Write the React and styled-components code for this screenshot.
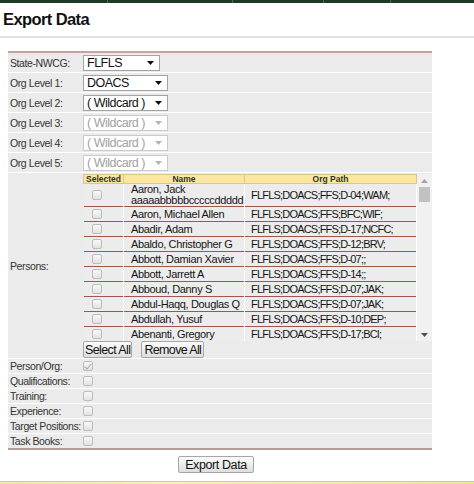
import React from 'react'
import styled, { createGlobalStyle } from 'styled-components'

const GlobalStyle = createGlobalStyle`
    html, body {
        margin: 0;
        padding: 0;
        background: #fff;
    }
    body {
        font-family: "Liberation Sans", Arial, sans-serif;
        color: #222;
    }
`;

const Page = styled.div`
    width: 474px;
    height: 484px;
    overflow: hidden;
    display: flex;
    flex-direction: column;
`;

const TopNav = styled.div`
    height: 3px;
    flex-shrink: 0;
    display: flex;
    background: #1d3a29;
`;

const NavItem = styled.div`
    width: ${p => p.$w}px;
    border-right: 1px solid #4f6c59;
`;

const Header = styled.div`
    padding: 6px 3px 7px;
    border-bottom: 2px solid #e3e3e3;
`;

const Title = styled.h1`
    margin: 0;
    font-size: 16.5px;
    line-height: 20px;
    font-weight: bold;
    letter-spacing: -0.6px;
    color: #111;
`;

const Main = styled.div`
    padding: 13px 0 0 8px;
`;

const FormTable = styled.div`
    width: 424px;
    display: flex;
    flex-direction: column;
    border-top: 2px solid #c4a39c;
    border-bottom: 2px solid #b39f98;
`;

const Row = styled.div`
    display: grid;
    grid-template-columns: 75px 1fr;
    align-items: center;
    min-height: ${p => p.$h}px;
    background: #ebebeb;
    & + & {
        border-top: 1px solid #fff;
    }
`;

const Label = styled.div`
    padding-left: 2px;
    font-size: 10.5px;
    letter-spacing: -0.4px;
    color: #333;
    white-space: nowrap;
`;

const SelectBox = styled.div`
    display: flex;
    align-items: center;
    justify-content: space-between;
    box-sizing: border-box;
    width: ${p => p.$w}px;
    height: 16px;
    padding: 0 5px 0 3px;
    background: #fff;
    border: 1px solid ${p => (p.$disabled ? '#cacaca' : '#a3a3a3')};
    font-size: 12.5px;
    letter-spacing: -0.5px;
    color: ${p => (p.$disabled ? '#a2a2a2' : '#111')};
    white-space: pre;
`;

const PersonsBox = styled.div`
    display: flex;
    flex-direction: column;
    padding-top: 1px;
`;

const ListFrame = styled.div`
    display: flex;
    height: 167px;
`;

const ListViewport = styled.div`
    width: 334px;
    overflow: hidden;
`;

const Table = styled.table`
    width: 334px;
    table-layout: fixed;
    border-collapse: collapse;
`;

const HeadCell = styled.th`
    width: ${p => p.$w}px;
    height: 8px;
    padding: 0;
    background: #fbe7a1;
    border: 1px solid #dcc68a;
    font-size: 8.5px;
    line-height: 8px;
    font-weight: bold;
    color: #333;
    text-align: center;
`;

const BodyRow = styled.tr`
    border-bottom: 1px solid #a0574b;
`;

const Cell = styled.td`
    height: ${p => (p.$tall ? 22 : 14)}px;
    padding: 0 0 0 ${p => p.$pad}px;
    background: #ececec;
    border-right: 1px solid #fff;
    font-size: 11px;
    line-height: 11px;
    letter-spacing: ${p => p.$ls}px;
    white-space: ${p => (p.$tall ? 'normal' : 'nowrap')};
    color: #151515;
    vertical-align: middle;
    overflow: hidden;
`;

const Scrollbar = styled.div`
    width: 15px;
    display: flex;
    flex-direction: column;
    background: #f1f1f1;
`;

const ScrollArrow = styled.div`
    height: 13px;
    display: flex;
    align-items: center;
    justify-content: center;
`;

const Thumb = styled.div`
    height: 15px;
    margin: 0 2px;
    background: #c1c1c1;
`;

const Track = styled.div`
    flex: 1;
`;

const ButtonRow = styled.div`
    display: flex;
    gap: 9px;
`;

const Button = styled.button`
    height: ${p => p.$h || 17}px;
    padding: 0 ${p => p.$px || 1}px;
    margin: 0;
    border: 1px solid #a6a6a6;
    border-radius: 2px;
    background: linear-gradient(#fbfbfb, #dedede);
    font-family: "Liberation Sans", Arial, sans-serif;
    font-size: 12.5px;
    letter-spacing: ${p => p.$ls}px;
    color: #111;
    line-height: 14px;
    white-space: nowrap;
`;

const Check = styled.input.attrs({ type: 'checkbox' })`
    appearance: none;
    -webkit-appearance: none;
    position: relative;
    width: 10px;
    height: 10px;
    margin: 0;
    border: 1px solid #bcbcbc;
    border-radius: 2px;
    background: linear-gradient(#f8f8f8, #e2e2e2);
    display: block;
    &:checked::after {
        content: '';
        position: absolute;
        left: 2px;
        top: 0px;
        width: 3px;
        height: 6px;
        border: solid #a9a9a9;
        border-width: 0 1.5px 1.5px 0;
        transform: rotate(40deg);
    }
`;

const ExportRow = styled.div`
    width: 424px;
    display: flex;
    justify-content: center;
    padding: 6px 0 0;
    margin-left: -4px;
`;

const Footer = styled.div`
    margin-top: 8px;
    height: 20px;
    border-top: 1px solid #d4cda6;
    background: linear-gradient(90deg, #f1e5a4 0%, #f8f0bd 35%, #f3e9a8 70%, #efe29a 100%);
`;

const Arrow = ({ color = '#111', up }) => (
    <svg width="7" height="4" viewBox="0 0 7 4">
        <polygon points={up ? '0,4 7,4 3.5,0' : '0,0 7,0 3.5,4'} fill={color} />
    </svg>
);

const Select = ({ value, width, disabled }) => (
    <SelectBox $w={width} $disabled={disabled} role="combobox">
        <span>{value}</span>
        <Arrow color={disabled ? '#b4b4b4' : '#111'} />
    </SelectBox>
);

const selects = [
    { label: 'State-NWCG:', value: 'FLFLS', width: 77 },
    { label: 'Org Level 1:', value: 'DOACS', width: 85 },
    { label: 'Org Level 2:', value: '( Wildcard )', width: 85 },
    { label: 'Org Level 3:', value: '( Wildcard )', width: 85, disabled: true },
    { label: 'Org Level 4:', value: '( Wildcard )', width: 85, disabled: true },
    { label: 'Org Level 5:', value: '( Wildcard )', width: 85, disabled: true },
];

const persons = [
    { name: 'Aaron, Jack aaaaabbbbbcccccddddd', path: 'FLFLS;DOACS;FFS;D-04;WAM;', tall: true },
    { name: 'Aaron, Michael Allen', path: 'FLFLS;DOACS;FFS;BFC;WIF;' },
    { name: 'Abadir, Adam', path: 'FLFLS;DOACS;FFS;D-17;NCFC;' },
    { name: 'Abaldo, Christopher G', path: 'FLFLS;DOACS;FFS;D-12;BRV;' },
    { name: 'Abbott, Damian Xavier', path: 'FLFLS;DOACS;FFS;D-07;;' },
    { name: 'Abbott, Jarrett A', path: 'FLFLS;DOACS;FFS;D-14;;' },
    { name: 'Abboud, Danny S', path: 'FLFLS;DOACS;FFS;D-07;JAK;' },
    { name: 'Abdul-Haqq, Douglas Q', path: 'FLFLS;DOACS;FFS;D-07;JAK;' },
    { name: 'Abdullah, Yusuf', path: 'FLFLS;DOACS;FFS;D-10;DEP;' },
    { name: 'Abenanti, Gregory', path: 'FLFLS;DOACS;FFS;D-17;BCI;' },
];

const options = [
    { label: 'Person/Org:', checked: true },
    { label: 'Qualifications:' },
    { label: 'Training:' },
    { label: 'Experience:' },
    { label: 'Target Positions:' },
    { label: 'Task Books:' },
];

export default function App() {
    return (
        <Page>
            <GlobalStyle />
            <TopNav>
                <NavItem $w={107} />
                <NavItem $w={124} />
                <NavItem $w={90} />
                <NavItem $w={66} />
            </TopNav>
            <Header>
                <Title>Export Data</Title>
            </Header>

            <Main>
                <FormTable>
                    {selects.map(s => (
                        <Row key={s.label} $h={19}>
                            <Label>{s.label}</Label>
                            <Select value={s.value} width={s.width} disabled={s.disabled} />
                        </Row>
                    ))}

                    <Row>
                        <Label>Persons:</Label>
                        <PersonsBox>
                            <ListFrame>
                                <ListViewport>
                                    <Table>
                                        <thead>
                                            <tr>
                                                <HeadCell $w={39}>Selected</HeadCell>
                                                <HeadCell $w={120}>Name</HeadCell>
                                                <HeadCell>Org Path</HeadCell>
                                            </tr>
                                        </thead>
                                        <tbody>
                                            {persons.map(p => (
                                                <BodyRow key={p.name}>
                                                    <Cell $pad={8} $tall={p.tall}>
                                                        <Check disabled />
                                                    </Cell>
                                                    <Cell $pad={7} $ls={-0.35} $tall={p.tall}>{p.name}</Cell>
                                                    <Cell $pad={6} $ls={-0.8} $tall={p.tall}>{p.path}</Cell>
                                                </BodyRow>
                                            ))}
                                        </tbody>
                                    </Table>
                                </ListViewport>
                                <Scrollbar>
                                    <ScrollArrow><Arrow up color="#a3a3a3" /></ScrollArrow>
                                    <Thumb />
                                    <Track />
                                    <ScrollArrow><Arrow color="#505050" /></ScrollArrow>
                                </Scrollbar>
                            </ListFrame>
                            <ButtonRow>
                                <Button $ls={-0.6}>Select All</Button>
                                <Button $ls={-0.65} $px={2}>Remove All</Button>
                            </ButtonRow>
                        </PersonsBox>
                    </Row>

                    {options.map(o => (
                        <Row key={o.label} $h={14}>
                            <Label>{o.label}</Label>
                            <Check defaultChecked={o.checked} disabled={o.checked} />
                        </Row>
                    ))}
                </FormTable>

                <ExportRow>
                    <Button $ls={-0.4} $px={6} $h={17}>Export Data</Button>
                </ExportRow>
            </Main>

            <Footer />
        </Page>
    )
}
